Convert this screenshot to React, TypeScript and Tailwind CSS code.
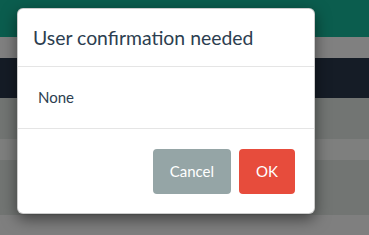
import React from "react";

export default function App() {
  return (
    <div
      className="relative w-[369px] h-[235px] overflow-hidden"
      style={{ fontFamily: "Lato, 'Noto Sans', sans-serif" }}
    >
      <div className="flex flex-col">
        <div className="h-[37px] bg-[#0b5d4e]" />
        <div className="h-[21px] bg-[#808080]" />
        <div className="h-[40px] bg-[#151c26]" />
        <div className="h-[41px] bg-[#727573]" />
        <div className="h-[21px] bg-[#7e7f7e]" />
        <div className="h-[55px] bg-[#727573]" />
        <div className="h-[20px] bg-[#7f7f7f]" />
      </div>

      <div className="absolute left-[17px] top-[8px] w-[298px] rounded-[6px] border border-black/20 bg-white shadow-[0_5px_15px_rgba(0,0,0,0.5)] text-[#2c3e50]">
        <div className="px-[15px] py-[15px] border-b border-[#e5e5e5]">
          <h4 className="text-[19.4px] leading-[27px] m-0">User confirmation needed</h4>
        </div>
        <div className="p-[20px] text-[15px] leading-[21px]">None</div>
        <div className="pt-[20px] pb-[19px] pl-[20px] pr-[19px] border-t border-[#e5e5e5] flex justify-end gap-[8px]">
          <button className="px-[15px] py-[10px] border-2 border-[#95a5a6] bg-[#95a5a6] text-white text-[15px] leading-[21px] rounded-[4px]">
            Cancel
          </button>
          <button className="px-[15px] py-[10px] border-2 border-[#e74c3c] bg-[#e74c3c] text-white text-[15px] leading-[21px] rounded-[4px]">
            OK
          </button>
        </div>
      </div>
    </div>
  );
}
